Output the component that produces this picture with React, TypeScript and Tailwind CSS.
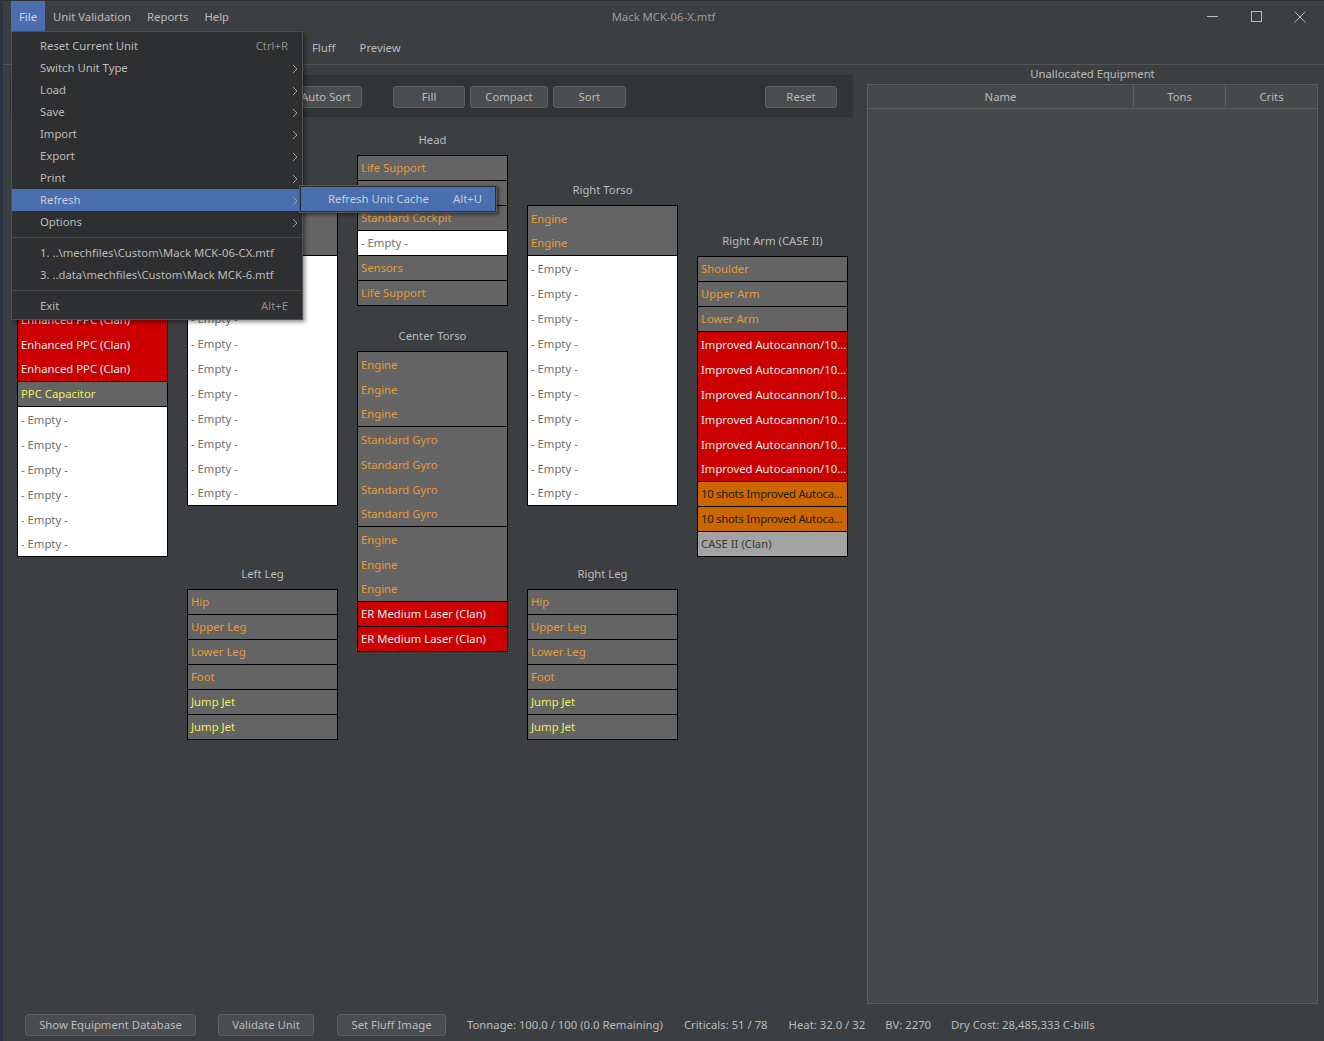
import React from "react";

type Kind = "sys" | "yel" | "wpn" | "ammo" | "case" | "empty";
type Group = { kind: Kind; text: string; n?: number };

const KIND: Record<Kind, string> = {
  sys: "bg-[#646464] text-[#e89b36]",
  yel: "bg-[#646464] text-[#eeee5a]",
  wpn: "bg-[#cc0000] text-[#cdeeee]",
  ammo: "bg-[#cc6600] text-[#1e1e1e] tracking-[-0.25px]",
  case: "bg-[#a3a3a3] text-[#3a3a3a]",
  empty: "bg-white text-[#6f6f6f]",
};

const g = (kind: Kind, text: string, n = 1): Group => ({ kind, text, n });

const LEFT_ARM: Group[] = [
  g("sys", "Shoulder"),
  g("sys", "Upper Arm"),
  g("wpn", "Enhanced PPC (Clan)", 3),
  g("yel", "PPC Capacitor"),
  g("empty", "- Empty -", 6),
];
const LEFT_TORSO: Group[] = [g("sys", "Engine", 2), g("empty", "- Empty -", 10)];
const RIGHT_TORSO: Group[] = [g("sys", "Engine", 2), g("empty", "- Empty -", 10)];
const HEAD: Group[] = [
  g("sys", "Life Support"),
  g("sys", "Sensors"),
  g("sys", "Standard Cockpit"),
  g("empty", "- Empty -"),
  g("sys", "Sensors"),
  g("sys", "Life Support"),
];
const CENTER_TORSO: Group[] = [
  g("sys", "Engine", 3),
  g("sys", "Standard Gyro", 4),
  g("sys", "Engine", 3),
  g("wpn", "ER Medium Laser (Clan)"),
  g("wpn", "ER Medium Laser (Clan)"),
];
const LEG: Group[] = [
  g("sys", "Hip"),
  g("sys", "Upper Leg"),
  g("sys", "Lower Leg"),
  g("sys", "Foot"),
  g("yel", "Jump Jet"),
  g("yel", "Jump Jet"),
];
const RIGHT_ARM: Group[] = [
  g("sys", "Shoulder"),
  g("sys", "Upper Arm"),
  g("sys", "Lower Arm"),
  g("wpn", "Improved Autocannon/10...", 6),
  g("ammo", "10 shots Improved Autoca..."),
  g("ammo", "10 shots Improved Autoca..."),
  g("case", "CASE II (Clan)"),
];

function Location({ title, groups }: { title: string; groups: Group[] }) {
  return (
    <div className="flex flex-col w-[151px]">
      <div className="h-[22px] leading-[22px] mb-[4px] text-center text-[#bbbbbb] whitespace-nowrap">{title}</div>
      <div className="border-x border-t border-black">
        {groups.map((grp, i) => (
          <div key={i} className={KIND[grp.kind]}>
            {Array.from({ length: grp.n ?? 1 }).map((_, j) => {
              const last = j === (grp.n ?? 1) - 1;
              return (
                <div
                  key={j}
                  className={
                    last
                      ? "h-[25px] border-b border-black pl-[3px] pt-[1px] flex items-center whitespace-nowrap overflow-hidden"
                      : "h-[25px] pl-[3px] pt-[1px] flex items-center whitespace-nowrap overflow-hidden"
                  }
                >
                  {grp.text}
                </div>
              );
            })}
          </div>
        ))}
      </div>
    </div>
  );
}

function Btn({ children, className = "" }: { children: React.ReactNode; className?: string }) {
  return (
    <div
      className={
        "h-[22px] flex items-center justify-center rounded-[3px] border border-[#5d6062] bg-[#4a4d4f] text-[#bbbbbb] whitespace-nowrap " +
        className
      }
    >
      {children}
    </div>
  );
}

function Chevron() {
  return (
    <svg width="6" height="10" viewBox="0 0 6 10">
      <polyline points="1,1 5,5 1,9" fill="none" stroke="#a0a0a0" strokeWidth="1" />
    </svg>
  );
}

type MI = { label: string; sc?: string; arrow?: boolean; hl?: boolean } | "sep";
const MENU: MI[] = [
  { label: "Reset Current Unit", sc: "Ctrl+R" },
  { label: "Switch Unit Type", arrow: true },
  { label: "Load", arrow: true },
  { label: "Save", arrow: true },
  { label: "Import", arrow: true },
  { label: "Export", arrow: true },
  { label: "Print", arrow: true },
  { label: "Refresh", arrow: true, hl: true },
  { label: "Options", arrow: true },
  "sep",
  { label: "1. ..\\mechfiles\\Custom\\Mack MCK-06-CX.mtf" },
  { label: "3. ..data\\mechfiles\\Custom\\Mack MCK-6.mtf" },
  "sep",
  { label: "Exit", sc: "Alt+E" },
];

export default function App() {
  return (
    <div
      className="w-[1324px] h-[1041px] flex overflow-hidden bg-[#3c3f41] text-[11.3px] text-[#bbbbbb]"
      style={{ fontFamily: '"Noto Sans", "Open Sans", sans-serif' }}
    >
      <div className="w-[3px] bg-[#2b3242] shrink-0" />
      <div className="flex-1 flex flex-col relative">
        {/* title + menu bar */}
        <div className="h-[32px] grid grid-cols-[1fr_auto_1fr] items-stretch border-t border-[#2d2f30]">
          <div className="flex items-stretch pl-[8px]">
            <div className="px-[8px] pt-[1px] flex items-center bg-[#4b6eaf] text-[#d0d6e0]">File</div>
            <div className="px-[8px] pt-[1px] flex items-center">Unit Validation</div>
            <div className="px-[8px] pt-[1px] flex items-center">Reports</div>
            <div className="px-[8px] pt-[1px] flex items-center">Help</div>
          </div>
          <div className="flex items-center pt-[1px] text-[#9c9c9c]">Mack MCK-06-X.mtf</div>
          <div className="flex justify-end pr-[2px]">
            <div className="w-[44px] flex items-center justify-center">
              <svg width="11" height="11" viewBox="0 0 11 11">
                <line x1="0" y1="5.5" x2="11" y2="5.5" stroke="#bbbbbb" strokeWidth="1" />
              </svg>
            </div>
            <div className="w-[44px] flex items-center justify-center">
              <svg width="11" height="11" viewBox="0 0 11 11">
                <rect x="0.5" y="0.5" width="10" height="10" fill="none" stroke="#bbbbbb" strokeWidth="1" />
              </svg>
            </div>
            <div className="w-[44px] flex items-center justify-center">
              <svg width="12" height="12" viewBox="0 0 12 12">
                <line x1="0.5" y1="0.5" x2="11.5" y2="11.5" stroke="#bbbbbb" strokeWidth="1" />
                <line x1="11.5" y1="0.5" x2="0.5" y2="11.5" stroke="#bbbbbb" strokeWidth="1" />
              </svg>
            </div>
          </div>
        </div>

        {/* tab bar */}
        <div className="h-[33px] flex items-stretch border-b border-[#54575a]">
          <div className="w-[297px] flex items-stretch overflow-hidden">
            <div className="px-[12px] flex items-center whitespace-nowrap">Structure/Armor</div>
            <div className="px-[12px] flex items-center whitespace-nowrap">Equipment</div>
            <div className="px-[12px] flex items-center whitespace-nowrap">Assign Criticals</div>
          </div>
          <div className="px-[12px] flex items-center">Fluff</div>
          <div className="px-[12px] flex items-center">Preview</div>
        </div>

        {/* main */}
        <div className="h-[940px] flex">
          {/* left panel */}
          <div className="w-[859px] flex flex-col">
            <div className="mt-[10px] ml-[7px] mr-[9px] h-[42px] bg-[#313335] flex pt-[11px]">
              <Btn className="ml-[210px] w-[72px]">Remove All</Btn>
              <Btn className="ml-[-2px] w-[72px]">Auto Sort</Btn>
              <Btn className="ml-[31px] w-[72px]">Fill</Btn>
              <Btn className="ml-[5px] w-[78px]">Compact</Btn>
              <Btn className="ml-[5px] w-[73px]">Sort</Btn>
              <Btn className="ml-[139px] w-[72px]">Reset</Btn>
            </div>
            <div className="flex gap-[19px] pl-[14px]">
              <div className="pt-[113px]">
                <Location title="Left Arm" groups={LEFT_ARM} />
              </div>
              <div className="pt-[62px] flex flex-col gap-[57px]">
                <Location title="Left Torso" groups={LEFT_TORSO} />
                <Location title="Left Leg" groups={LEG} />
              </div>
              <div className="pt-[12px] flex flex-col gap-[19px]">
                <Location title="Head" groups={HEAD} />
                <Location title="Center Torso" groups={CENTER_TORSO} />
              </div>
              <div className="pt-[62px] flex flex-col gap-[57px]">
                <Location title="Right Torso" groups={RIGHT_TORSO} />
                <Location title="Right Leg" groups={LEG} />
              </div>
              <div className="pt-[113px]">
                <Location title="Right Arm (CASE II)" groups={RIGHT_ARM} />
              </div>
            </div>
          </div>
          {/* right panel */}
          <div className="flex-1 flex flex-col pl-[5px] pr-[6px] pb-[1px]">
            <div className="h-[19px] flex items-center justify-center">Unallocated Equipment</div>
            <div className="flex-1 border border-[#5b5f61] bg-[#45494a] flex flex-col">
              <div className="h-[24px] grid grid-cols-[1fr_92px_92px] border-b border-[#5b5f61]">
                <div className="flex items-center justify-center pt-[1px]">Name</div>
                <div className="flex items-center justify-center pt-[1px] border-l border-[#5b5f61]">Tons</div>
                <div className="flex items-center justify-center pt-[1px] border-l border-[#5b5f61]">Crits</div>
              </div>
            </div>
          </div>
        </div>

        {/* bottom bar */}
        <div className="flex-1 flex items-start pt-[9px] pl-[22px] whitespace-nowrap">
          <Btn className="w-[171px]">Show Equipment Database</Btn>
          <Btn className="ml-[22px] w-[96px] border-[#4b6eaf]">Validate Unit</Btn>
          <Btn className="ml-[23px] w-[109px]">Set Fluff Image</Btn>
          <div className="ml-[21px] h-[22px] flex items-center">Tonnage: 100.0 / 100 (0.0 Remaining)</div>
          <div className="ml-[21px] h-[22px] flex items-center">Criticals: 51 / 78</div>
          <div className="ml-[21px] h-[22px] flex items-center">Heat: 32.0 / 32</div>
          <div className="ml-[20px] h-[22px] flex items-center">BV: 2270</div>
          <div className="ml-[20px] h-[22px] flex items-center">Dry Cost: 28,485,333 C-bills</div>
        </div>

        {/* File menu overlay */}
        <div className="absolute left-[8px] top-[31px] w-[292px] h-[289px] bg-[#2e2f30] border border-[#505254] shadow-[2px_2px_4px_rgba(0,0,0,0.45)] pt-[3px] flex flex-col">
          {MENU.map((m, i) =>
            m === "sep" ? (
              <div key={i} className="h-[9px] flex items-center">
                <div className="h-[1px] w-full bg-[#46484a]" />
              </div>
            ) : (
              <div
                key={i}
                className={
                  m.hl
                    ? "h-[22px] flex items-center pl-[28px] pt-[1px] bg-[#4b6eaf] text-[#c6cdd9]"
                    : "h-[22px] flex items-center pl-[28px] pt-[1px]"
                }
              >
                <span className="flex-1 whitespace-nowrap">{m.label}</span>
                <span className="text-[#8c8c8c]">{m.sc}</span>
                <span className="w-[14px] flex justify-center">{m.arrow ? <Chevron /> : null}</span>
              </div>
            )
          )}
        </div>

        {/* Refresh submenu overlay */}
        <div className="absolute left-[296px] top-[185px] w-[198px] bg-[#2e2f30] border border-[#55585a] p-[1px] shadow-[2px_2px_3px_rgba(0,0,0,0.45)]">
          <div className="h-[24px] bg-[#4b6eaf] flex items-center pl-[27px] pr-[13px] pt-[1px] text-[#c6cdd9]">
            <span className="flex-1">Refresh Unit Cache</span>
            <span>Alt+U</span>
          </div>
        </div>
      </div>
    </div>
  );
}
